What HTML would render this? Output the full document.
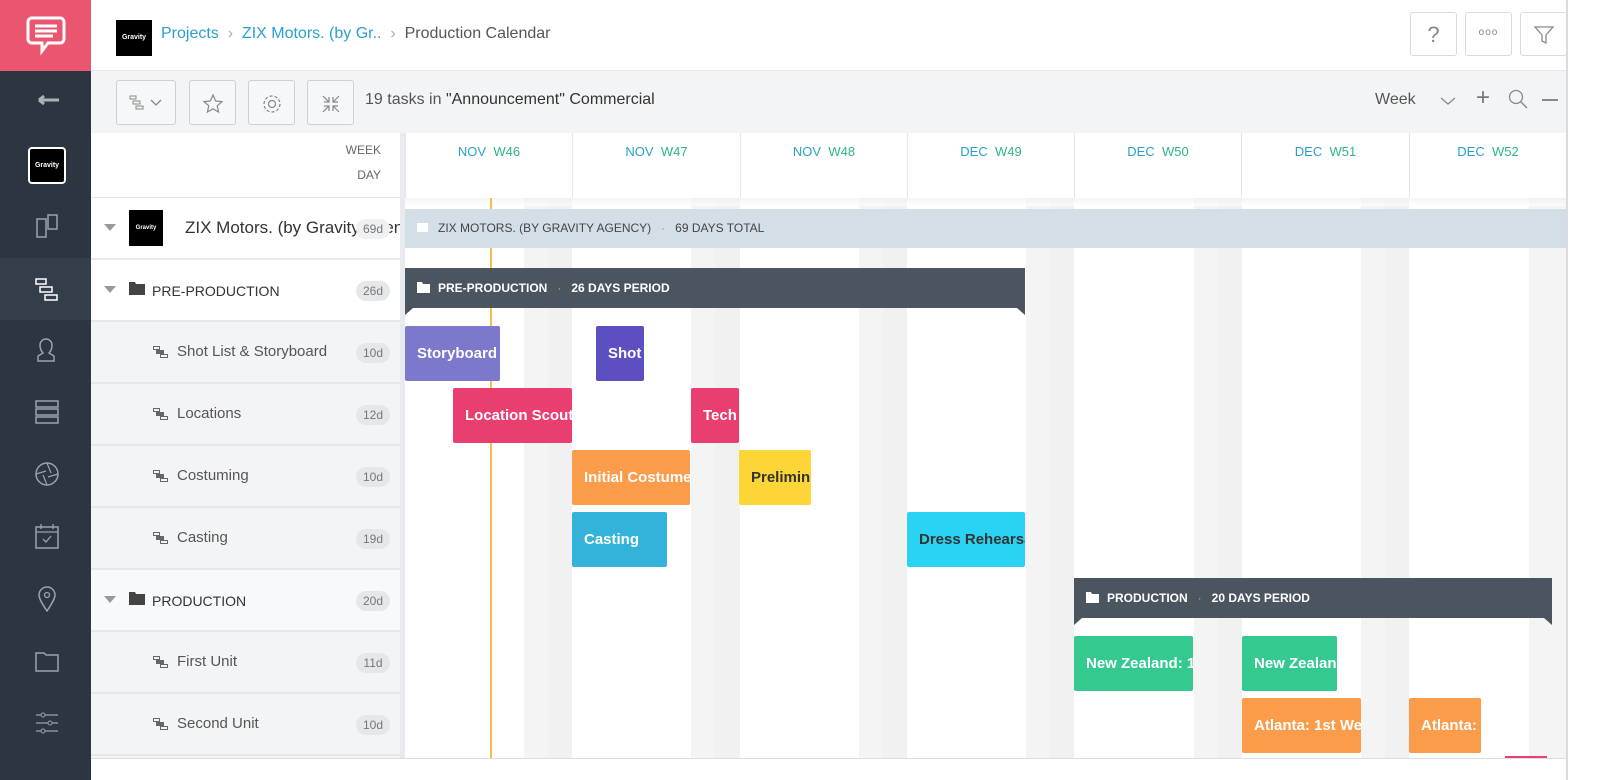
<!DOCTYPE html>
<html><head><meta charset="utf-8"><style>
*{box-sizing:border-box;margin:0;padding:0}
body{width:1604px;height:780px;overflow:hidden;background:#fff;font-family:"Liberation Sans",sans-serif;position:relative}
.a{position:absolute}
.side{left:0;top:0;width:91px;height:780px;background:#2d3540}
.logo{left:0;top:0;width:91px;height:71px;background:#ea5670}
.top{left:91px;top:0;width:1475px;height:71px;background:#fff;border-bottom:1px solid #e5e8ec}
.tb{left:91px;top:71px;width:1475px;height:62px;background:#f3f4f6}
.btn{position:absolute;top:80px;height:45px;border:1px solid #ccd1d7;border-radius:3px;background:#f6f7f9}
.tbtn{position:absolute;top:12px;height:44px;width:47px;border:1px solid #d7dbe0;border-radius:3px;background:#fff}
.lp{left:91px;top:133px;width:310px;height:647px;background:#f3f4f6}
.row{position:absolute;left:91px;width:309px;height:62px;border-bottom:2px solid #e6e8eb;background:#f3f4f6;font-size:15px;color:#555}
.badge{position:absolute;right:10px;top:21px;width:34px;height:20px;border-radius:10px;background:#e5e8eb;color:#777;font-size:12px;text-align:center;line-height:20px}
.ti{position:absolute;left:62px;top:24px;width:16px;height:13px}
.wk{position:absolute;top:133px;height:65px;border-left:1px solid #e3e5e8;color:#2a9fcf;font-size:13px;text-align:center;padding-top:11px}
.wk b{font-weight:normal;color:#2cb58a}
.we{position:absolute;top:198px;height:582px;background:#f1f1f1}
.bar{position:absolute;height:55px;color:#fff;font-size:15px;font-weight:bold;line-height:55px;padding-left:12px;white-space:nowrap;overflow:hidden;border-radius:2px}
.grp{position:absolute;height:40px;background:#4b5560;color:#fff;font-size:12px;font-weight:bold;line-height:40px;padding-left:33px;white-space:nowrap}
</style></head><body>
<div class="a side"></div>
<div class="a logo"><svg class="a" style="left:26px;top:15px" width="40" height="42" viewBox="0 0 40 42"><path d="M6 3h28a4 4 0 0 1 4 4v17a4 4 0 0 1-4 4H22l-6 8v-8H6a4 4 0 0 1-4-4V7a4 4 0 0 1 4-4z" fill="none" stroke="#fff" stroke-width="3"/><path d="M9 11h22M9 16h22M9 21h18" stroke="#fff" stroke-width="3"/></svg></div>
<svg class="a" style="left:37px;top:94px" width="22" height="12"><path d="M2 6h20M2 6l5-4M2 6l5 4" stroke="#aab2bc" stroke-width="3" fill="none"/></svg>
<div class="a" style="left:28px;top:147px;width:38px;height:37px;background:#000;border:2px solid #fff;border-radius:4px;color:#fff;font-size:7px;text-align:center;line-height:33px;font-weight:bold">Gravity</div>
<svg class="a" style="left:36px;top:214px" width="22" height="24"><rect x="1" y="5" width="9" height="18" fill="none" stroke="#9aa3ad" stroke-width="1.5"/><rect x="12" y="1" width="9" height="14" fill="none" stroke="#9aa3ad" stroke-width="1.5"/></svg>
<div class="a" style="left:0;top:258px;width:91px;height:62px;background:#343e4a"></div>
<svg class="a" style="left:35px;top:278px" width="24" height="24"><g fill="none" stroke="#fff" stroke-width="1.5"><rect x="1" y="1" width="10" height="5"/><rect x="5" y="9" width="12" height="5"/><rect x="10" y="17" width="12" height="5"/></g></svg>
<svg class="a" style="left:35px;top:338px" width="24" height="24"><path d="M3 23v-5l5-3c-2-2-3-4-3-8a6 6 0 0 1 12 0c0 4-1 6-3 8l5 3v5z" fill="none" stroke="#9aa3ad" stroke-width="1.5"/></svg>
<svg class="a" style="left:35px;top:400px" width="24" height="24"><g fill="none" stroke="#9aa3ad" stroke-width="1.5"><rect x="1" y="1" width="22" height="6"/><rect x="1" y="9" width="22" height="6"/><rect x="1" y="17" width="22" height="6"/></g></svg>
<svg class="a" style="left:35px;top:462px" width="24" height="24"><circle cx="12" cy="12" r="11" fill="none" stroke="#9aa3ad" stroke-width="1.5"/><path d="M12 1l4 10M23 12l-10 3M12 23l-4-10M1 12l10-3" stroke="#9aa3ad" stroke-width="1.2"/></svg>
<svg class="a" style="left:35px;top:523px" width="24" height="26"><rect x="1" y="4" width="22" height="21" fill="none" stroke="#9aa3ad" stroke-width="1.5"/><path d="M1 9h22M6 1v5M18 1v5M8 16l3 3 5-6" stroke="#9aa3ad" stroke-width="1.3" fill="none"/></svg>
<svg class="a" style="left:37px;top:586px" width="20" height="26"><path d="M10 25C4 16 2 12 2 9a8 8 0 0 1 16 0c0 3-2 7-8 16z" fill="none" stroke="#9aa3ad" stroke-width="1.5"/><circle cx="10" cy="9" r="2.5" fill="none" stroke="#9aa3ad" stroke-width="1.3"/></svg>
<svg class="a" style="left:35px;top:650px" width="24" height="22"><path d="M1 3h8l2 2h12v16H1z" fill="none" stroke="#9aa3ad" stroke-width="1.5"/></svg>
<svg class="a" style="left:35px;top:711px" width="24" height="24"><path d="M1 4h22M1 12h22M1 20h22" stroke="#9aa3ad" stroke-width="1.3"/><circle cx="8" cy="4" r="2" fill="#2d3540" stroke="#9aa3ad"/><circle cx="15" cy="12" r="2" fill="#2d3540" stroke="#9aa3ad"/><circle cx="8" cy="20" r="2" fill="#2d3540" stroke="#9aa3ad"/></svg>

<div class="a top">
 <div class="a" style="left:25px;top:20px;width:36px;height:36px;background:#000;color:#fff;font-size:7px;font-weight:bold;text-align:center;line-height:36px">Gravity</div>
 <div class="a" style="left:70px;top:25px;font-size:16px;color:#2a9fcf;white-space:nowrap">Projects <span style="color:#aaa">&nbsp;›&nbsp;</span> ZIX Motors. (by Gr.. <span style="color:#aaa">&nbsp;›&nbsp;</span> <span style="color:#555">Production Calendar</span></div>
 <div class="tbtn" style="left:1319px;text-align:center;line-height:44px;font-size:22px;color:#888">?</div>
 <div class="tbtn" style="left:1374px;text-align:center;line-height:40px;font-size:10px;color:#888;letter-spacing:1px">ooo</div>
 <div class="tbtn" style="left:1429px"><svg style="margin:12px 0 0 13px" width="20" height="20"><path d="M1 2h18l-7 8v8l-4-2v-6z" fill="none" stroke="#888" stroke-width="1.3"/></svg></div>
</div>
<div class="a tb"></div>
<div class="btn" style="left:116px;width:60px"><svg style="margin:14px 0 0 12px" width="36" height="16"><g fill="none" stroke="#888" stroke-width="1"><rect x="1" y="1" width="6" height="3"/><rect x="4" y="6" width="7" height="3"/><rect x="7" y="11" width="7" height="3"/></g><path d="M22 5l5 5 5-5" stroke="#888" fill="none" stroke-width="1.3"/></svg></div>
<div class="btn" style="left:189px;width:47px"><svg style="margin:12px 0 0 12px" width="22" height="22"><path d="M11 2l2.7 6 6.3.6-4.8 4.2 1.4 6.2L11 15.8 5.4 19l1.4-6.2L2 8.6 8.3 8z" fill="none" stroke="#888" stroke-width="1.2"/></svg></div>
<div class="btn" style="left:248px;width:47px"><svg style="margin:12px 0 0 12px" width="22" height="22"><circle cx="11" cy="11" r="3.5" fill="none" stroke="#888" stroke-width="1.2"/><circle cx="11" cy="11" r="8" fill="none" stroke="#888" stroke-width="1.2" stroke-dasharray="3 2"/></svg></div>
<div class="btn" style="left:307px;width:47px"><svg style="margin:12px 0 0 12px" width="22" height="22"><path d="M3 3l6 6M9 4v5H4M19 3l-6 6M13 4v5h5M3 19l6-6M9 18v-5H4M19 19l-6-6M13 18v-5h5" stroke="#888" stroke-width="1.2" fill="none"/></svg></div>
<div class="a" style="left:365px;top:91px;font-size:16px;color:#555;white-space:nowrap">19 tasks in <span style="color:#333">"Announcement" Commercial</span></div>
<div class="a" style="left:1375px;top:91px;font-size:16px;color:#555">Week</div>
<svg class="a" style="left:1440px;top:96px" width="16" height="10"><path d="M1 2l7 6 7-6" stroke="#888" fill="none" stroke-width="1.3"/></svg>
<div class="a" style="left:1476px;top:84px;font-size:24px;color:#777">+</div>
<svg class="a" style="left:1508px;top:89px" width="22" height="22"><circle cx="8" cy="8" r="6.5" fill="none" stroke="#888" stroke-width="1.3"/><path d="M13 13l6 6" stroke="#888" stroke-width="1.5"/></svg>
<div class="a" style="left:1542px;top:99px;width:16px;height:2px;background:#888"></div>

<div class="a lp"></div>
<div class="a" style="left:91px;top:133px;width:309px;height:65px;background:#fff;border-bottom:1px solid #e3e5e8;box-shadow:0 2px 3px rgba(0,0,0,.05)"></div>
<div class="a" style="left:300px;top:143px;width:81px;text-align:right;font-size:12px;color:#666">WEEK</div>
<div class="a" style="left:300px;top:168px;width:81px;text-align:right;font-size:12px;color:#666">DAY</div>
<div class="row" style="top:198px;background:#fff;height:62px">
 <div class="a" style="left:13px;top:26px;border:6px solid transparent;border-top:7px solid #999"></div>
 <div class="a" style="left:38px;top:12px;width:34px;height:36px;background:#000;color:#fff;font-size:6px;font-weight:bold;text-align:center;line-height:36px">Gravity</div>
 <div class="a" style="left:94px;top:20px;font-size:17px;color:#333;white-space:nowrap;width:215px;overflow:hidden">ZIX Motors. (by Gravity Agen</div>
 <div class="badge" style="background:#eef0f2">69d</div>
</div>
<div class="row" style="top:260px;background:#fff">
 <div class="a" style="left:13px;top:26px;border:6px solid transparent;border-top:7px solid #999"></div>
 <svg class="a" style="left:38px;top:21px" width="16" height="14"><path d="M0 1h6l1 2h9v11H0z" fill="#444"/></svg>
 <div class="a" style="left:61px;top:23px;font-size:14px;color:#333">PRE-PRODUCTION</div><div class="badge">26d</div>
</div>
<div class="row" style="top:322px"><svg class="ti" viewBox="0 0 16 13"><g fill="none" stroke="#666"><rect x=".5" y=".5" width="6" height="3"/><rect x="3.5" y="4.5" width="7" height="3" fill="#666"/><rect x="7.5" y="8.5" width="7" height="3"/></g></svg><div class="a" style="left:86px;top:21px">Shot List &amp; Storyboard</div><div class="badge">10d</div></div>
<div class="row" style="top:384px"><svg class="ti" viewBox="0 0 16 13"><g fill="none" stroke="#666"><rect x=".5" y=".5" width="6" height="3"/><rect x="3.5" y="4.5" width="7" height="3" fill="#666"/><rect x="7.5" y="8.5" width="7" height="3"/></g></svg><div class="a" style="left:86px;top:21px">Locations</div><div class="badge">12d</div></div>
<div class="row" style="top:446px"><svg class="ti" viewBox="0 0 16 13"><g fill="none" stroke="#666"><rect x=".5" y=".5" width="6" height="3"/><rect x="3.5" y="4.5" width="7" height="3" fill="#666"/><rect x="7.5" y="8.5" width="7" height="3"/></g></svg><div class="a" style="left:86px;top:21px">Costuming</div><div class="badge">10d</div></div>
<div class="row" style="top:508px"><svg class="ti" viewBox="0 0 16 13"><g fill="none" stroke="#666"><rect x=".5" y=".5" width="6" height="3"/><rect x="3.5" y="4.5" width="7" height="3" fill="#666"/><rect x="7.5" y="8.5" width="7" height="3"/></g></svg><div class="a" style="left:86px;top:21px">Casting</div><div class="badge">19d</div></div>
<div class="row" style="top:570px;background:#f8f9fa">
 <div class="a" style="left:13px;top:26px;border:6px solid transparent;border-top:7px solid #999"></div>
 <svg class="a" style="left:38px;top:21px" width="16" height="14"><path d="M0 1h6l1 2h9v11H0z" fill="#444"/></svg>
 <div class="a" style="left:61px;top:23px;font-size:14px;color:#333">PRODUCTION</div><div class="badge">20d</div>
</div>
<div class="row" style="top:632px"><svg class="ti" viewBox="0 0 16 13"><g fill="none" stroke="#666"><rect x=".5" y=".5" width="6" height="3"/><rect x="3.5" y="4.5" width="7" height="3" fill="#666"/><rect x="7.5" y="8.5" width="7" height="3"/></g></svg><div class="a" style="left:86px;top:21px">First Unit</div><div class="badge">11d</div></div>
<div class="row" style="top:694px"><svg class="ti" viewBox="0 0 16 13"><g fill="none" stroke="#666"><rect x=".5" y=".5" width="6" height="3"/><rect x="3.5" y="4.5" width="7" height="3" fill="#666"/><rect x="7.5" y="8.5" width="7" height="3"/></g></svg><div class="a" style="left:86px;top:21px">Second Unit</div><div class="badge">10d</div></div>
<div class="a" style="left:400px;top:133px;width:5px;height:647px;background:#e8eaed"></div>

<div class="we" style="left:524px;width:24px;background:#f4f4f4"></div><div class="we" style="left:548px;width:24px"></div>
<div class="we" style="left:691px;width:24px;background:#f4f4f4"></div><div class="we" style="left:715px;width:25px"></div>
<div class="we" style="left:859px;width:24px;background:#f4f4f4"></div><div class="we" style="left:883px;width:24px"></div>
<div class="we" style="left:1026px;width:24px;background:#f4f4f4"></div><div class="we" style="left:1050px;width:24px"></div>
<div class="we" style="left:1194px;width:24px;background:#f4f4f4"></div><div class="we" style="left:1218px;width:24px"></div>
<div class="we" style="left:1361px;width:24px;background:#f4f4f4"></div><div class="we" style="left:1385px;width:24px"></div>
<div class="we" style="left:1529px;width:37px;background:#f4f4f4"></div>
<div class="a" style="left:405px;top:198px;width:1161px;height:8px;background:linear-gradient(#eee,#fff);opacity:.6"></div>
<div class="wk" style="left:405px;width:167px"><span>NOV</span>&nbsp; <b>W46</b></div>
<div class="wk" style="left:572px;width:168px">NOV&nbsp; <b>W47</b></div>
<div class="wk" style="left:740px;width:167px">NOV&nbsp; <b>W48</b></div>
<div class="wk" style="left:907px;width:167px">DEC&nbsp; <b>W49</b></div>
<div class="wk" style="left:1074px;width:167px">DEC&nbsp; <b>W50</b></div>
<div class="wk" style="left:1241px;width:168px">DEC&nbsp; <b>W51</b></div>
<div class="wk" style="left:1409px;width:157px">DEC&nbsp; <b>W52</b></div>
<div class="a" style="left:490px;top:198px;width:2px;height:582px;background:#f5c04a"></div>
<div class="a" style="left:405px;top:209px;width:1161px;height:39px;background:#d4dee6;color:#444;font-size:12px;line-height:39px;padding-left:33px;white-space:nowrap">ZIX MOTORS. (BY GRAVITY AGENCY) <span style="color:#999">&nbsp;&nbsp;·&nbsp;&nbsp;</span> 69 DAYS TOTAL</div>
<div class="a" style="left:417px;top:223px;width:11px;height:9px;background:#fff"></div>
<div class="grp" style="left:405px;top:268px;width:620px">PRE-PRODUCTION <span style="font-weight:normal;color:#aaa">&nbsp;&nbsp;·&nbsp;&nbsp;</span> 26 DAYS PERIOD</div>
<svg class="a" style="left:417px;top:282px" width="13" height="11"><path d="M0 0h5l1 2h7v9H0z" fill="#fff"/></svg>
<div class="a" style="left:405px;top:308px;border-left:8px solid #4b5560;border-bottom:7px solid transparent"></div>
<div class="a" style="left:1017px;top:308px;border-right:8px solid #4b5560;border-bottom:7px solid transparent"></div>
<div class="bar" style="left:405px;top:326px;width:95px;background:#7c78cb">Storyboard</div>
<div class="bar" style="left:596px;top:326px;width:48px;background:#5b4fc2">Shot</div>
<div class="bar" style="left:453px;top:388px;width:119px;background:#e83f70">Location Scout</div>
<div class="bar" style="left:691px;top:388px;width:48px;background:#e83f70">Tech</div>
<div class="bar" style="left:572px;top:450px;width:118px;background:#fa9c4a">Initial Costume</div>
<div class="bar" style="left:739px;top:450px;width:72px;background:#fcd637;color:#333">Prelimin</div>
<div class="bar" style="left:572px;top:512px;width:95px;background:#33b3da">Casting</div>
<div class="bar" style="left:907px;top:512px;width:118px;background:#2ad3f4;color:#333">Dress Rehearsal</div>
<div class="grp" style="left:1074px;top:578px;width:478px">PRODUCTION <span style="font-weight:normal;color:#aaa">&nbsp;&nbsp;·&nbsp;&nbsp;</span> 20 DAYS PERIOD</div>
<svg class="a" style="left:1086px;top:592px" width="13" height="11"><path d="M0 0h5l1 2h7v9H0z" fill="#fff"/></svg>
<div class="a" style="left:1074px;top:618px;border-left:8px solid #4b5560;border-bottom:7px solid transparent"></div>
<div class="a" style="left:1544px;top:618px;border-right:8px solid #4b5560;border-bottom:7px solid transparent"></div>
<div class="bar" style="left:1074px;top:636px;width:119px;background:#33c98f">New Zealand: 1st</div>
<div class="bar" style="left:1242px;top:636px;width:95px;background:#33c98f">New Zealand</div>
<div class="bar" style="left:1242px;top:698px;width:119px;background:#fa9c4a">Atlanta: 1st Week</div>
<div class="bar" style="left:1409px;top:698px;width:72px;background:#fa9c4a">Atlanta:</div>
<div class="a" style="left:1505px;top:756px;width:42px;height:4px;background:#e83f70"></div>
<div class="a" style="left:91px;top:758px;width:1475px;height:22px;background:#fff;border-top:1px solid #ddd"></div>
<div class="a" style="left:1566px;top:0;width:2px;height:780px;background:#d8dbdf"></div>
<div class="a" style="left:1568px;top:0;width:36px;height:780px;background:#fff"></div>
</body></html>
